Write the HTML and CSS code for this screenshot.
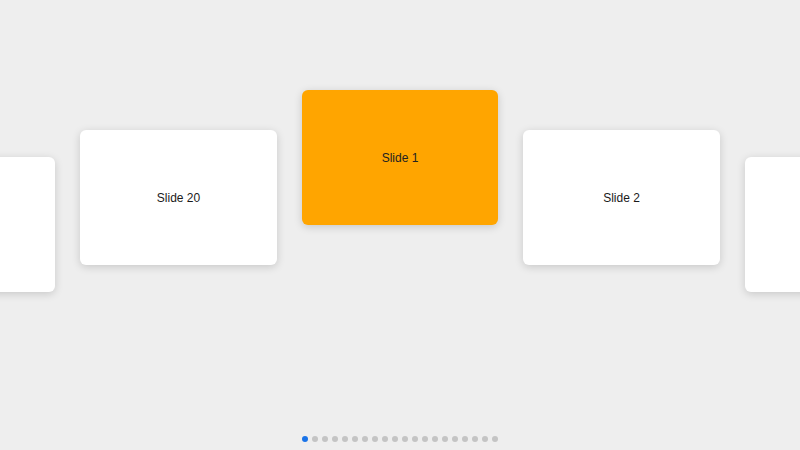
FILE: index.html
```html
<!DOCTYPE html>
<html>
<head>
<meta charset="utf-8">
<link rel="stylesheet" href="styles.css">
</head>
<body>
<div class="carousel">
  <div class="track">
    <div class="card far"></div>
    <div class="card side"><span>Slide 20</span></div>
    <div class="card active"><span>Slide 1</span></div>
    <div class="card side"><span>Slide 2</span></div>
    <div class="card far"></div>
  </div>
  <div class="dots">
    <span class="dot on"></span><span class="dot"></span><span class="dot"></span><span class="dot"></span><span class="dot"></span><span class="dot"></span><span class="dot"></span><span class="dot"></span><span class="dot"></span><span class="dot"></span><span class="dot"></span><span class="dot"></span><span class="dot"></span><span class="dot"></span><span class="dot"></span><span class="dot"></span><span class="dot"></span><span class="dot"></span><span class="dot"></span><span class="dot"></span>
  </div>
</div>
</body>
</html>
```
FILE: styles.css
```css
html, body {
  margin: 0;
  padding: 0;
  background: #eeeeee;
}
.carousel {
  width: 800px;
  height: 450px;
  overflow: hidden;
  display: flex;
  flex-direction: column;
  font-family: "Liberation Sans", Arial, sans-serif;
}
.track {
  display: flex;
  align-items: flex-start;
  gap: 25px;
  margin-left: -142px;
  height: 436px;
  flex: none;
}
.card {
  flex: none;
  width: 197px;
  height: 135px;
  background: #ffffff;
  border-radius: 6px;
  box-shadow: 0 2px 8px rgba(0, 0, 0, 0.16);
  display: flex;
  align-items: center;
  justify-content: center;
  font-size: 12px;
  color: #1a1a1a;
}
.card.far { margin-top: 157px; }
.card.side { margin-top: 130px; }
.card.active {
  margin-top: 90px;
  width: 196px;
  background: #ffa500;
  color: #222;
}
.dots {
  display: flex;
  justify-content: center;
  gap: 4px;
}
.dot {
  width: 6px;
  height: 6px;
  border-radius: 50%;
  background: #c4c4c4;
}
.dot.on { background: #1a73e8; }
```
